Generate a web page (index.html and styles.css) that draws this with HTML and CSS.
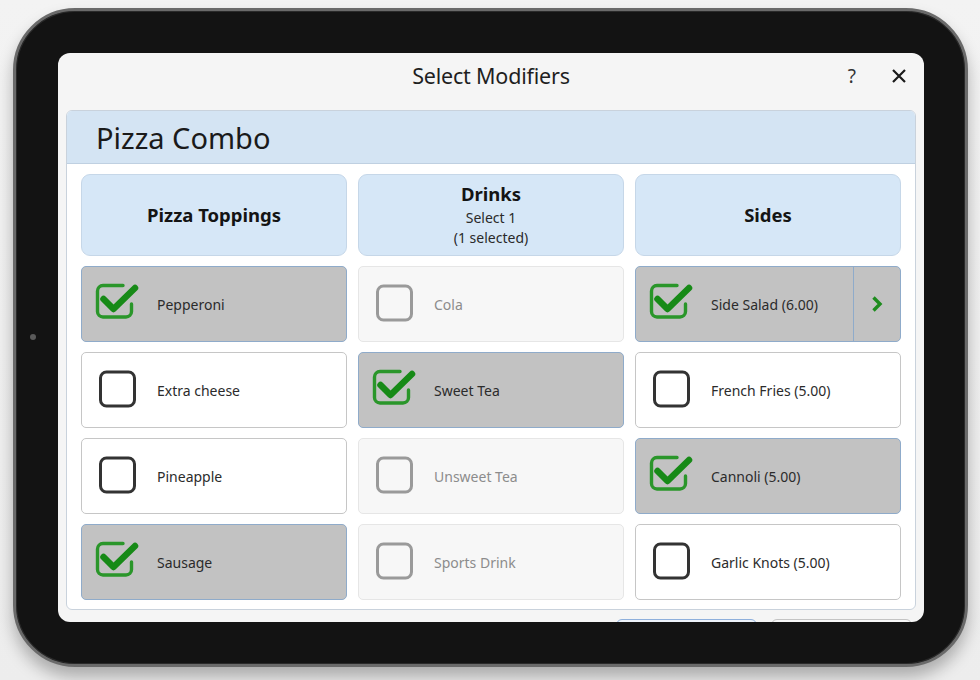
FILE: index.html
```html
<!DOCTYPE html>
<html>
<head>
<meta charset="utf-8">
<link rel="stylesheet" href="styles.css">
</head>
<body>
<div class="tablet">
  <span class="camera"></span>
  <div class="screen">
    <div class="titlebar">
      <div></div>
      <div class="title">Select Modifiers</div>
      <div class="title-actions">
        <span class="help">?</span>
        <svg class="close" width="16" height="16" viewBox="0 0 16 16"><path d="M2 2 L14 14 M14 2 L2 14" stroke="#1a1a1a" stroke-width="2.2" fill="none"/></svg>
      </div>
    </div>

    <div class="panel">
      <div class="panel-head">Pizza Combo</div>
      <div class="grid">
        <div class="col-head"><div class="col-title">Pizza Toppings</div></div>
        <div class="col-head"><div class="col-title">Drinks</div><div class="col-sub">Select 1</div><div class="col-sub">(1 selected)</div></div>
        <div class="col-head"><div class="col-title">Sides</div></div>

        <!-- row 1 -->
        <div class="item selected">
          <svg class="cb" width="46" height="44" viewBox="0 0 46 44"><path class="box-on" d="M29,3.5 H9 a5.5,5.5 0 0 0 -5.5,5.5 V29.5 a5.5,5.5 0 0 0 5.5,5.5 H32 a5.5,5.5 0 0 0 5.5,-5.5 V22"/><path class="tick" d="M9.5,17 L19.5,27 L41,6"/></svg>
          <span class="label">Pepperoni</span>
        </div>
        <div class="item disabled">
          <svg class="cb" width="46" height="44" viewBox="0 0 46 44"><rect class="box-dis" x="6.5" y="4" width="34" height="34" rx="6"/></svg>
          <span class="label">Cola</span>
        </div>
        <div class="item selected split">
          <div class="item-main">
            <svg class="cb" width="46" height="44" viewBox="0 0 46 44"><path class="box-on" d="M29,3.5 H9 a5.5,5.5 0 0 0 -5.5,5.5 V29.5 a5.5,5.5 0 0 0 5.5,5.5 H32 a5.5,5.5 0 0 0 5.5,-5.5 V22"/><path class="tick" d="M9.5,17 L19.5,27 L41,6"/></svg>
            <span class="label">Side Salad (6.00)</span>
          </div>
          <div class="item-more">
            <svg width="14" height="18" viewBox="0 0 14 18"><path d="M3.5 2.5 L10 9 L3.5 15.5" stroke="#1e8c1e" stroke-width="3.4" fill="none" stroke-linejoin="miter"/></svg>
          </div>
        </div>

        <!-- row 2 -->
        <div class="item">
          <svg class="cb" width="46" height="44" viewBox="0 0 46 44"><rect class="box-off" x="6.5" y="4" width="34" height="34" rx="6"/></svg>
          <span class="label">Extra cheese</span>
        </div>
        <div class="item selected">
          <svg class="cb" width="46" height="44" viewBox="0 0 46 44"><path class="box-on" d="M29,3.5 H9 a5.5,5.5 0 0 0 -5.5,5.5 V29.5 a5.5,5.5 0 0 0 5.5,5.5 H32 a5.5,5.5 0 0 0 5.5,-5.5 V22"/><path class="tick" d="M9.5,17 L19.5,27 L41,6"/></svg>
          <span class="label">Sweet Tea</span>
        </div>
        <div class="item">
          <svg class="cb" width="46" height="44" viewBox="0 0 46 44"><rect class="box-off" x="6.5" y="4" width="34" height="34" rx="6"/></svg>
          <span class="label">French Fries (5.00)</span>
        </div>

        <!-- row 3 -->
        <div class="item">
          <svg class="cb" width="46" height="44" viewBox="0 0 46 44"><rect class="box-off" x="6.5" y="4" width="34" height="34" rx="6"/></svg>
          <span class="label">Pineapple</span>
        </div>
        <div class="item disabled">
          <svg class="cb" width="46" height="44" viewBox="0 0 46 44"><rect class="box-dis" x="6.5" y="4" width="34" height="34" rx="6"/></svg>
          <span class="label">Unsweet Tea</span>
        </div>
        <div class="item selected">
          <svg class="cb" width="46" height="44" viewBox="0 0 46 44"><path class="box-on" d="M29,3.5 H9 a5.5,5.5 0 0 0 -5.5,5.5 V29.5 a5.5,5.5 0 0 0 5.5,5.5 H32 a5.5,5.5 0 0 0 5.5,-5.5 V22"/><path class="tick" d="M9.5,17 L19.5,27 L41,6"/></svg>
          <span class="label">Cannoli (5.00)</span>
        </div>

        <!-- row 4 -->
        <div class="item selected">
          <svg class="cb" width="46" height="44" viewBox="0 0 46 44"><path class="box-on" d="M29,3.5 H9 a5.5,5.5 0 0 0 -5.5,5.5 V29.5 a5.5,5.5 0 0 0 5.5,5.5 H32 a5.5,5.5 0 0 0 5.5,-5.5 V22"/><path class="tick" d="M9.5,17 L19.5,27 L41,6"/></svg>
          <span class="label">Sausage</span>
        </div>
        <div class="item disabled">
          <svg class="cb" width="46" height="44" viewBox="0 0 46 44"><rect class="box-dis" x="6.5" y="4" width="34" height="34" rx="6"/></svg>
          <span class="label">Sports Drink</span>
        </div>
        <div class="item">
          <svg class="cb" width="46" height="44" viewBox="0 0 46 44"><rect class="box-off" x="6.5" y="4" width="34" height="34" rx="6"/></svg>
          <span class="label">Garlic Knots (5.00)</span>
        </div>
      </div>
    </div>

    <div class="actions">
      <div class="btn btn-primary"></div>
      <div class="btn"></div>
    </div>
  </div>
</div>
</body>
</html>
```

FILE: styles.css
```css
html, body {
  margin: 0;
  padding: 0;
}
body {
  width: 980px;
  height: 680px;
  overflow: hidden;
  background: linear-gradient(#f3f3f3, #ededed);
  font-family: "Noto Sans", "Open Sans", sans-serif;
  color: #222;
}
.tablet {
  position: relative;
  box-sizing: border-box;
  margin: 8px 0 0 13px;
  width: 955px;
  height: 659px;
  border: 3px solid #6a6a6a;
  border-radius: 62px;
  background: #131313;
  padding: 42px 41px 42px 42px;
  box-shadow: 0 10px 16px rgba(0,0,0,0.28), inset 0 0 0 1px #2a2a2a;
}
.camera {
  position: absolute;
  left: 14px;
  top: 323px;
  width: 6px;
  height: 6px;
  border-radius: 50%;
  background: #5a5a5a;
}
.screen {
  width: 100%;
  height: 100%;
  background: #f5f5f5;
  border-radius: 12px;
  overflow: hidden;
  display: flex;
  flex-direction: column;
}
.titlebar {
  height: 45px;
  flex: none;
  display: grid;
  grid-template-columns: 1fr auto 1fr;
  align-items: center;
}
.title {
  font-size: 21.5px;
  color: #1f1f1f;
  letter-spacing: -0.2px;
}
.title-actions {
  display: flex;
  justify-content: flex-end;
  align-items: center;
  gap: 35px;
  padding-right: 17px;
}
.help {
  font-size: 19px;
  color: #333;
}
.close {
  display: block;
}
.panel {
  flex: none;
  margin: 12px 8px 0;
  background: #fff;
  border: 1px solid #c9d2dc;
  border-radius: 6px;
  overflow: hidden;
}
.panel-head {
  height: 52px;
  line-height: 54px;
  background: #d4e4f3;
  border-bottom: 1px solid #bfd0e1;
  padding-left: 29px;
  font-size: 29px;
  color: #1a1a1a;
}
.grid {
  display: grid;
  grid-template-columns: repeat(3, 1fr);
  grid-template-rows: 82px repeat(4, 76px);
  column-gap: 11px;
  row-gap: 10px;
  padding: 10px 14px 9px;
}
.col-head {
  box-sizing: border-box;
  background: #d6e7f7;
  border: 1px solid #c6d7e8;
  border-radius: 9px;
  display: flex;
  flex-direction: column;
  align-items: center;
  justify-content: center;
}
.col-title {
  font-size: 18.5px;
  font-weight: 700;
  color: #141414;
  line-height: 24px;
}
.col-head .col-title + .col-sub {
  margin-top: 2px;
}
.col-sub {
  font-size: 14px;
  line-height: 20px;
  color: #2a2a2a;
}
.item {
  box-sizing: border-box;
  display: flex;
  align-items: center;
  background: #fff;
  border: 1.5px solid #c6c6c6;
  border-radius: 5px;
  padding-left: 12px;
}
.item .cb {
  flex: none;
  display: block;
  overflow: visible;
}
.label {
  margin-left: 17px;
  font-size: 14px;
  color: #2b2b2b;
}
.item.selected {
  background: #c2c2c2;
  border-color: #8fabca;
}
.item.disabled {
  background: #f7f7f7;
  border-color: #e6e6e6;
}
.item.disabled .label {
  color: #8c8c8c;
}
.item.split {
  padding-left: 0;
}
.item-main {
  flex: 1;
  display: flex;
  align-items: center;
  padding-left: 12px;
  height: 100%;
}
.item-more {
  flex: none;
  width: 46px;
  height: 100%;
  border-left: 1.5px solid #8fabca;
  display: flex;
  align-items: center;
  justify-content: center;
}
.item-more svg {
  display: block;
}
.box-on {
  fill: none;
  stroke: #2a962a;
  stroke-width: 3.4;
  stroke-linecap: round;
}
.tick {
  fill: none;
  stroke: #178a17;
  stroke-width: 6.5;
  stroke-linecap: round;
  stroke-linejoin: round;
}
.box-off {
  fill: none;
  stroke: #333;
  stroke-width: 3;
}
.box-dis {
  fill: none;
  stroke: #9a9a9a;
  stroke-width: 3;
}
.actions {
  flex: none;
  display: flex;
  justify-content: flex-end;
  gap: 14px;
  margin-top: 9px;
  padding-right: 12px;
}
.btn {
  box-sizing: border-box;
  width: 141px;
  height: 48px;
  border: 1.5px solid #c4c4c4;
  border-radius: 6px;
  background: #f7f7f7;
}
.btn-primary {
  border-color: #8fb0dc;
  background: #eef3fa;
}
```
